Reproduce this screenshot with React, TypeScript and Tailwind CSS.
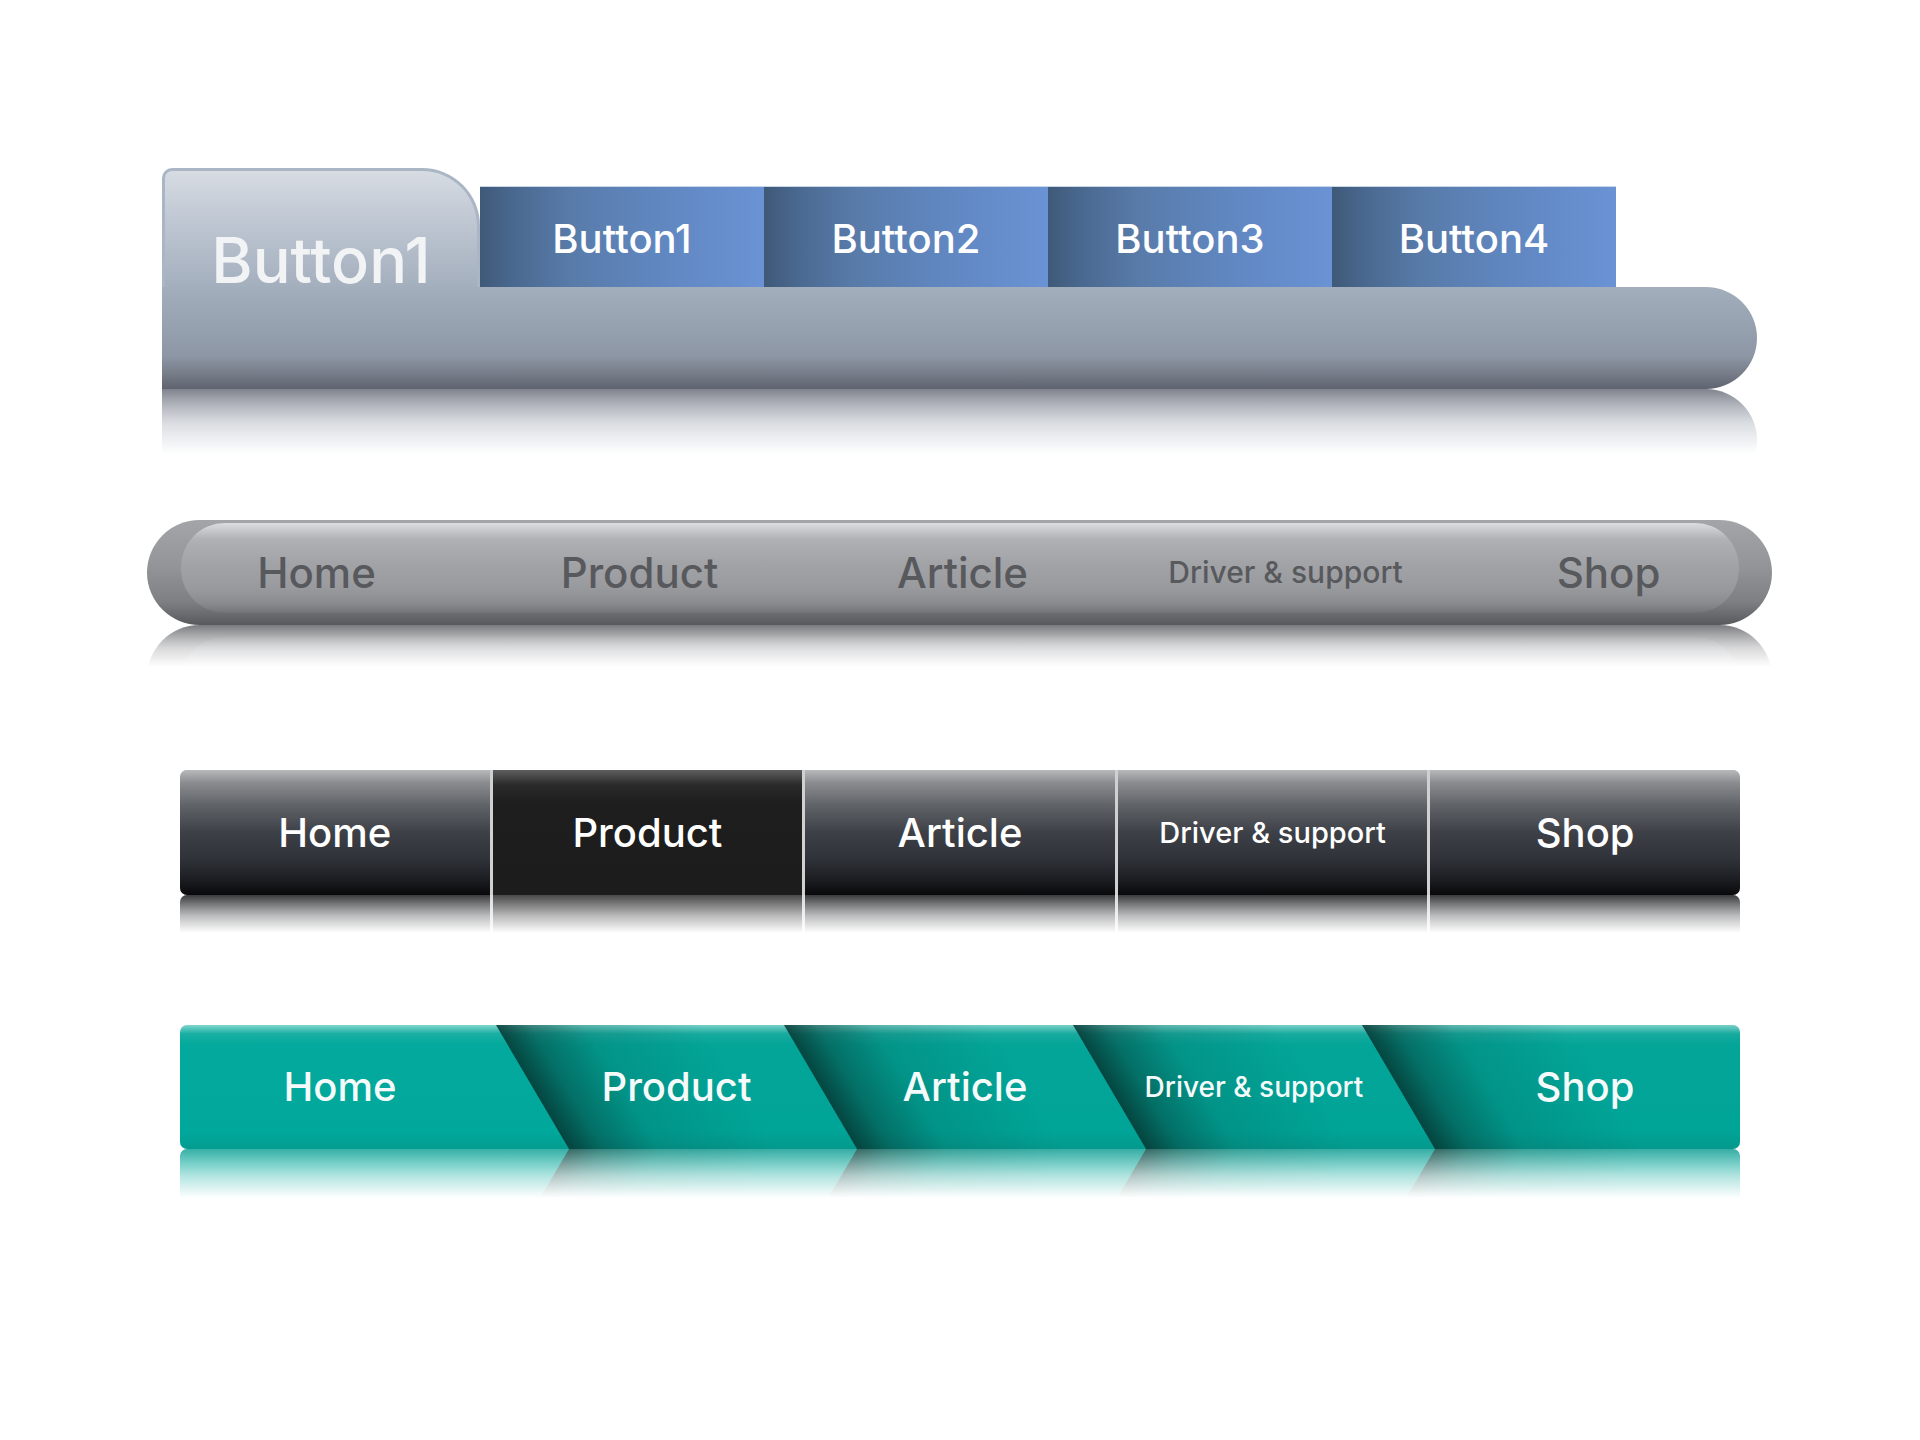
import type { ReactNode } from 'react';

const blueButtons = ['Button1', 'Button2', 'Button3', 'Button4'];

const menu = [
  { label: 'Home', small: false },
  { label: 'Product', small: false },
  { label: 'Article', small: false },
  { label: 'Driver & support', small: true },
  { label: 'Shop', small: false },
];

// mirrored copy under each bar, faded out
function Reflection({ className, children }: { className: string; children: ReactNode }) {
  return (
    <div
      aria-hidden
      className={`overflow-hidden select-none [mask-image:linear-gradient(to_bottom,rgba(0,0,0,0.8),rgba(0,0,0,0.3)_55%,transparent)] [-webkit-mask-image:linear-gradient(to_bottom,rgba(0,0,0,0.8),rgba(0,0,0,0.3)_55%,transparent)] ${className}`}
    >
      <div className="-scale-y-100">{children}</div>
    </div>
  );
}

function TabBar() {
  const bar = (
    <div className="h-[102px] rounded-r-full bg-[linear-gradient(#a3aebd,#98a3b2_35%,#8c96a5_68%,#787e8a_84%,#5f6370)]" />
  );
  return (
    <section className="ml-[162px] w-[1595px]">
      <div className="flex items-end">
        <div className="flex h-[119px] w-[318px] items-end justify-center rounded-tl-[10px] rounded-tr-[58px] border-[3px] border-b-0 border-[#aab6c5] bg-[linear-gradient(#d7dce3,#c0c8d3_40%,#a4afbe)] pb-[4px]">
          <span className="text-[63px] font-medium leading-[46px] text-[#f2f3f5]">Button1</span>
        </div>
        <div className="flex h-[101px] border-t border-[#c9d6ea]">
          {blueButtons.map((b) => (
            <div
              key={b}
              className="flex w-[284px] items-center justify-center bg-[linear-gradient(to_right,#3f5978,#4a6990_12%,#587ba9_32%,#5f85bd_58%,#6a93d5)] pt-1 text-[40px] font-medium text-white"
            >
              {b}
            </div>
          ))}
        </div>
      </div>
      {bar}
      <Reflection className="h-[66px]">{bar}</Reflection>
    </section>
  );
}

function Pill({ withText }: { withText: boolean }) {
  return (
    <div className="relative h-[105px] rounded-full bg-[linear-gradient(#a4a5a9,#939498_45%,#7e7f83_78%,#58595d)]">
      <div className="absolute top-[3px] right-[33px] bottom-[12px] left-[34px] rounded-[44px] bg-[linear-gradient(#dcdddf,#b0b1b5_18%,#a2a3a7_45%,#9a9b9f_70%,rgba(140,141,145,0.2))]" />
      <div className="relative grid h-full grid-cols-5 pr-[2px] pl-[8px]">
        {menu.map((m) => (
          <div
            key={m.label}
            className={`flex items-center justify-center font-medium text-[#58595d] ${m.small ? 'text-[30px]' : 'text-[42px]'}`}
          >
            {withText ? m.label : null}
          </div>
        ))}
      </div>
    </div>
  );
}

function PillBar() {
  return (
    <section className="mt-[65px] ml-[147px] w-[1625px]">
      <Pill withText />
      <Reflection className="h-[42px]">
        <Pill withText={false} />
      </Reflection>
    </section>
  );
}

function Dark({ withText }: { withText: boolean }) {
  return (
    <div className="flex h-[125px] gap-[3px] overflow-hidden rounded-[7px] bg-[#d0d0d0]">
      {menu.map((m) => (
        <div
          key={m.label}
          className={`flex flex-1 items-center justify-center font-medium text-white ${m.small ? 'text-[29px]' : 'text-[40px]'} ${
            m.label === 'Product'
              ? 'bg-[linear-gradient(#5e5e5e,#2a2a2a_12%,#1e1e1e_26%,#1c1c1c)]'
              : 'bg-[linear-gradient(#b8b9bb,#8b8d90_10%,#606368_28%,#3d4046_50%,#30333a_70%,#1b1d21_88%,#09090b)]'
          }`}
        >
          {withText ? m.label : null}
        </div>
      ))}
    </div>
  );
}

function DarkBar() {
  return (
    <section className="mt-[103px] ml-[180px] w-[1560px]">
      <Dark withText />
      <Reflection className="h-[38px]">
        <Dark withText={false} />
      </Reflection>
    </section>
  );
}

const tealSegs = [
  { label: 'Home', cls: 'w-[389px] pr-[69px] text-[40px] [background-image:linear-gradient(to_bottom,#80d6cf,#1aafa3_7%,#03a99c_16%,#00a89b_86%,#049c90)]' },
  { label: 'Product', cls: '-ml-[73px] w-[361px] text-[40px] [clip-path:polygon(0_0,100%_0,100%_100%,73px_100%)] [background-image:linear-gradient(59deg,rgba(5,52,48,0.85)_63px,rgba(5,64,58,0.55)_92px,rgba(4,84,76,0.25)_140px,rgba(0,100,92,0.06)_240px),linear-gradient(to_bottom,#80d6cf,#1aafa3_7%,#03a99c_16%,#00a89b_86%,#049c90)]' },
  { label: 'Article', cls: '-ml-[73px] w-[362px] text-[40px] [clip-path:polygon(0_0,100%_0,100%_100%,73px_100%)] [background-image:linear-gradient(59deg,rgba(5,52,48,0.85)_63px,rgba(5,64,58,0.55)_92px,rgba(4,84,76,0.25)_140px,rgba(0,100,92,0.06)_240px),linear-gradient(to_bottom,#80d6cf,#1aafa3_7%,#03a99c_16%,#00a89b_86%,#049c90)]' },
  { label: 'Driver & support', cls: '-ml-[73px] w-[362px] text-[28px] [clip-path:polygon(0_0,100%_0,100%_100%,73px_100%)] [background-image:linear-gradient(59deg,rgba(5,52,48,0.85)_63px,rgba(5,64,58,0.55)_92px,rgba(4,84,76,0.25)_140px,rgba(0,100,92,0.06)_240px),linear-gradient(to_bottom,#80d6cf,#1aafa3_7%,#03a99c_16%,#00a89b_86%,#049c90)]' },
  { label: 'Shop', cls: '-ml-[73px] w-[378px] pl-[68px] text-[40px] [clip-path:polygon(0_0,100%_0,100%_100%,73px_100%)] [background-image:linear-gradient(59deg,rgba(5,52,48,0.85)_63px,rgba(5,64,58,0.55)_92px,rgba(4,84,76,0.25)_140px,rgba(0,100,92,0.06)_240px),linear-gradient(to_bottom,#80d6cf,#1aafa3_7%,#03a99c_16%,#00a89b_86%,#049c90)]' },
];

function Teal({ withText }: { withText: boolean }) {
  return (
    <div className="flex h-[124px] overflow-hidden rounded-[7px]">
      {tealSegs.map((s) => (
        <div key={s.label} className={`flex shrink-0 items-center justify-center font-medium text-[#f5fbfa] ${s.cls}`}>
          {withText ? s.label : null}
        </div>
      ))}
    </div>
  );
}

function TealBar() {
  return (
    <section className="mt-[92px] ml-[180px] w-[1560px]">
      <Teal withText />
      <Reflection className="h-[49px]">
        <Teal withText={false} />
      </Reflection>
    </section>
  );
}

export default function App() {
  return (
    <div className="min-h-[1440px] w-[1920px] bg-white pt-[168px] font-[Inter,'Noto_Sans',sans-serif] antialiased">
      <TabBar />
      <PillBar />
      <DarkBar />
      <TealBar />
    </div>
  );
}
